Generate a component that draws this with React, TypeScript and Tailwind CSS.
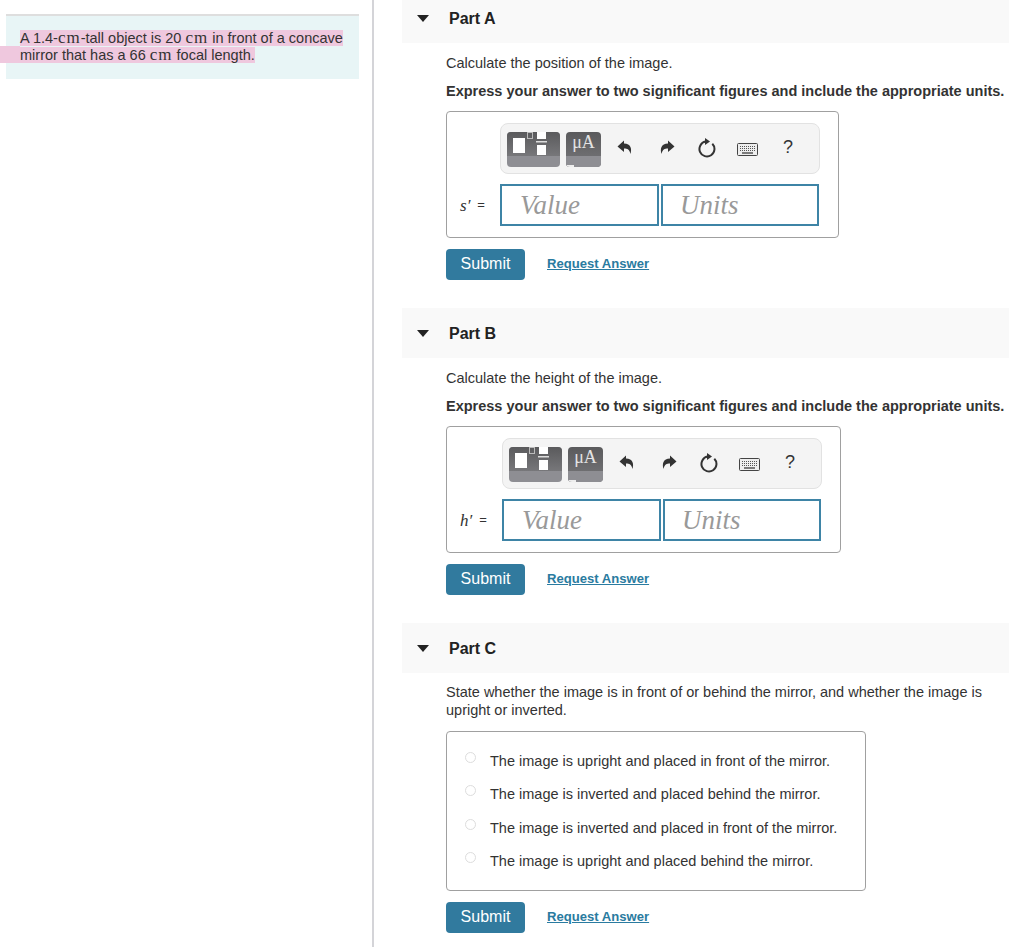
import React from "react";

const TemplateIcon = () => (
  <svg width="54" height="35" viewBox="0 0 54 35" className="block">
    <defs>
      <linearGradient id="tpl" x1="0" y1="0" x2="0" y2="1">
        <stop offset="0" stopColor="#5a5a5c" />
        <stop offset="1" stopColor="#77777a" />
      </linearGradient>
    </defs>
    <rect width="53" height="35" rx="4" fill="#8e8e93" />
    <path d="M4 0h45a4 4 0 0 1 4 4v20H0V4a4 4 0 0 1 4-4z" fill="url(#tpl)" />
    <rect x="6" y="6" width="12" height="15" fill="#fff" />
    <rect x="20.500" y="0.500" width="5" height="6" fill="none" stroke="#bbb" />
    <rect x="30" y="0" width="9" height="7" fill="#fff" />
    <rect x="29" y="9" width="11" height="1.500" fill="#ddd" />
    <rect x="30" y="13" width="9" height="10" fill="#fff" />
  </svg>
);

const UndoIcon = ({ flip }: { flip?: boolean }) => (
  <svg width="16" height="16" viewBox="0 0 16 16" className={flip ? "-scale-x-100" : ""}>
    <path d="M7 1.500.5 7.500 7 13V9.500c3.500 0 5.500 1 6.500 5.500 1.500-5 .5-10.500-6.500-10.500z" fill="#333" />
  </svg>
);

const ResetIcon = () => (
  <svg width="20" height="20" viewBox="0 0 20 20" fill="none">
    <path d="M15.300 5.700A7.500 7.500 0 1 1 8.500 3.600" stroke="#333" strokeWidth="2" />
    <path d="M8 0 13 3.500 8 7z" fill="#333" />
  </svg>
);

const KeyboardIcon = () => (
  <svg width="21" height="13" viewBox="0 0 21 13" fill="none">
    <rect x="0.500" y="0.500" width="20" height="12" rx="1" fill="#eee" stroke="#444" />
    <path d="M3 3.500h15M3 5.500h15M3 7.500h15" stroke="#555" strokeDasharray="1 1" />
    <path d="M5 10h11" stroke="#555" strokeWidth="1.500" />
  </svg>
);

const Toolbar = () => (
  <div className="flex h-[51px] w-[320px] items-center rounded-lg border border-[#e2e2e2] bg-[#f4f4f4] pl-[6px] pt-[2px]">
    <TemplateIcon />
    <div className="relative ml-[5px] h-[35px] w-[35px] overflow-hidden rounded bg-gradient-to-b from-[#5a5a5c] to-[#77777a]">
      <div className="relative z-10 text-center font-['Liberation_Serif',serif] text-[18px] leading-[20px] text-[#e4e4e4]">μA</div>
      <div className="absolute inset-x-0 bottom-0 h-[11px] bg-[#8e8e93]" />
      <div className="absolute bottom-0 left-[1px] h-[2px] w-[7px] bg-[#eee]" />
    </div>
    <div className="mb-[6px] ml-[16px] flex w-[16px] justify-center"><UndoIcon /></div>
    <div className="mb-[6px] ml-[26px] flex w-[16px] justify-center"><UndoIcon flip /></div>
    <div className="mb-[4px] ml-[22px] flex w-[20px] justify-center"><ResetIcon /></div>
    <div className="ml-[20px] flex w-[21px] justify-center"><KeyboardIcon /></div>
    <div className="mb-[6px] ml-[25px] text-[18px] leading-none text-[#333]">?</div>
  </div>
);

const Answer = ({ label, labelWidth }: { label: string; labelWidth: string }) => (
  <div className="mt-[11px] w-fit rounded border border-[#a0a0a0] pb-[11px] pl-[13px] pr-[18px] pt-[11px]">
    <div className="flex">
      <div className={labelWidth} />
      <Toolbar />
    </div>
    <div className="mt-[10px] flex items-center">
      <div className={`${labelWidth} flex items-center text-[13px] text-[#333]`}>
        <span className="font-['Liberation_Serif',serif] text-[17px] italic leading-none">{label}′</span>
        <span className="ml-[7px]">=</span>
      </div>
      <div className="flex h-[42px] w-[159px] items-center border-2 border-[#3e84a6] pl-[18px] font-['Liberation_Serif',serif] text-[27px] italic text-[#999]">Value</div>
      <div className="ml-[2px] flex h-[42px] w-[158px] items-center border-2 border-[#3e84a6] pl-[17px] font-['Liberation_Serif',serif] text-[27px] italic text-[#999]">Units</div>
    </div>
  </div>
);

const Actions = () => (
  <div className="mt-[11px] flex items-center">
    <button className="h-[31px] w-[79px] rounded-sm bg-[#317a9e] pb-[1px] text-[16px] text-white">Submit</button>
    <a className="mb-[2px] ml-[22px] text-[13.100px] font-bold text-[#2a7ba0] underline">Request Answer</a>
  </div>
);

const PartHeader = ({ name, className }: { name: string; className: string }) => (
  <div className={`flex items-center bg-[#f9f9f9] pl-[15px] ${className}`}>
    <div className="h-0 w-0 border-x-[6.500px] border-t-[7px] border-x-transparent border-t-[#222]" />
    <div className="ml-[20px] pt-[2px] text-[16px] font-bold leading-none text-[#222]">{name}</div>
  </div>
);

const Cm = () => <span className="font-['Liberation_Serif',serif] text-[17px] leading-[10px] tracking-[1px]">cm</span>;

const options = [
  "The image is upright and placed in front of the mirror.",
  "The image is inverted and placed behind the mirror.",
  "The image is inverted and placed in front of the mirror.",
  "The image is upright and placed behind the mirror.",
];

export default function App() {
  return (
    <div className="flex h-[947px] w-[1024px] overflow-hidden bg-white font-['Liberation_Sans',sans-serif] text-[14.500px] text-[#333]">
      {/* Left: problem statement */}
      <div className="relative w-[374px] shrink-0 border-r-2 border-[#d4d4d8] pl-[6px] pr-[13px] pt-[14px]">
        <div className="h-[65px] border-t-2 border-[#dedede] bg-[#e8f5f6] pl-[14px] pr-[10px] pt-[14px] leading-[17px]">
          <span className="bg-[#efc8de]">
            A 1.4-<Cm />-tall object is 20 <Cm /> in front of a concave mirror that has a 66 <Cm /> focal length.
          </span>
        </div>
        <div className="absolute left-0 top-[46px] h-[17px] w-[20px] bg-[#efc8de]" />
      </div>

      {/* Right: parts */}
      <div className="ml-[28px] w-[607px] shrink-0">
        <PartHeader name="Part A" className="h-[43px] pb-[7px]" />
        <div className="pl-[44px]">
          <p className="mt-[10px] pt-[1px] leading-[18px]">Calculate the position of the image.</p>
          <p className="mt-[10px] whitespace-nowrap font-bold leading-[18px]">Express your answer to two significant figures and include the appropriate units.</p>
          <Answer label="s" labelWidth="w-[40px]" />
          <Actions />
        </div>

        <PartHeader name="Part B" className="mt-[28px] h-[50px]" />
        <div className="pl-[44px]">
          <p className="mt-[11px] leading-[18px]">Calculate the height of the image.</p>
          <p className="mt-[10px] whitespace-nowrap font-bold leading-[18px]">Express your answer to two significant figures and include the appropriate units.</p>
          <Answer label="h" labelWidth="w-[42px]" />
          <Actions />
        </div>

        <PartHeader name="Part C" className="mt-[28px] h-[50px]" />
        <div className="pl-[44px]">
          <p className="mt-[10px] w-[545px] leading-[18px]">State whether the image is in front of or behind the mirror, and whether the image is upright or inverted.</p>
          <div className="mt-[12px] flex h-[160px] w-[420px] flex-col gap-[15.400px] rounded border border-[#a0a0a0] pl-[18px] pt-[20px]">
            {options.map((o) => (
              <div key={o} className="flex h-[18px] items-center">
                <div className="mb-[7px] h-[11px] w-[11px] rounded-full border border-[#ddd] bg-white" />
                <div className="ml-[14px] leading-[18px]">{o}</div>
              </div>
            ))}
          </div>
          <Actions />
        </div>
      </div>
    </div>
  );
}
